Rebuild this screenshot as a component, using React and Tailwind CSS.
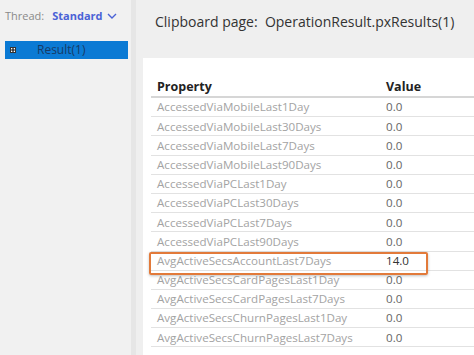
import React from 'react';

const rows = [
  ['AccessedViaMobileLast1Day', '0.0'],
  ['AccessedViaMobileLast30Days', '0.0'],
  ['AccessedViaMobileLast7Days', '0.0'],
  ['AccessedViaMobileLast90Days', '0.0'],
  ['AccessedViaPCLast1Day', '0.0'],
  ['AccessedViaPCLast30Days', '0.0'],
  ['AccessedViaPCLast7Days', '0.0'],
  ['AccessedViaPCLast90Days', '0.0'],
  ['AvgActiveSecsAccountLast7Days', '14.0', true],
  ['AvgActiveSecsCardPagesLast1Day', '0.0'],
  ['AvgActiveSecsCardPagesLast7Days', '0.0'],
  ['AvgActiveSecsChurnPagesLast1Day', '0.0'],
  ['AvgActiveSecsChurnPagesLast7Days', '0.0'],
];

const App = () => {
  return (
    <div
      className="w-[474px] h-[355px] overflow-hidden flex bg-[#efefef]"
      style={{ fontFamily: '"Open Sans", "Noto Sans", sans-serif' }}
    >
      {/* tree panel */}
      <div className="w-[131px] shrink-0 bg-[#f1f1f1] flex flex-col">
        <div className="h-[41px] flex items-start pt-[8px] pl-[5px] text-[11px]">
          <span className="text-[#8a8a8a]">Thread:</span>
          <span className="ml-[8px] font-bold text-[#4a62d6]">Standard</span>
          <svg className="ml-[4px] mt-[5px]" width="10" height="6" viewBox="0 0 10 6">
            <path d="M1 1l4 4 4-4" fill="none" stroke="#4a62d6" strokeWidth="1.4" />
          </svg>
        </div>
        <div className="ml-[5px] w-[123px] h-[18px] bg-[#0b7ad4] flex items-center">
          <div className="ml-[5px] w-[6px] h-[6px] bg-white border border-[#333] flex items-center justify-center">
            <div className="w-[4px] h-[4px] bg-[#111]" style={{ clipPath: 'polygon(35% 0,65% 0,65% 35%,100% 35%,100% 65%,65% 65%,65% 100%,35% 100%,35% 65%,0 65%,0 35%,35% 35%)' }} />
          </div>
          <span className="ml-[21px] text-[12px] text-[#173a66]">Result(1)</span>
        </div>
      </div>
      <div className="w-[5px] shrink-0 bg-[#e6e6e6]" />

      {/* clipboard page */}
      <div className="flex-1 flex flex-col">
        <div className="h-[58px] shrink-0 pl-[19px] pt-[11px] text-[14px] text-[#333] whitespace-pre">
          Clipboard page:  OperationResult.pxResults(1)
        </div>
        <div className="flex-1 ml-[7px] bg-white pl-[8px] pt-[20px]">
          <div className="relative">
            <div className="flex h-[20px] items-center pt-[1px] border-b-2 border-[#d6d6d6] text-[12.5px] font-bold text-[#222]">
              <div className="w-[229px] pl-[6px]">Property</div>
              <div className="pl-[6px]">Value</div>
            </div>
            {rows.map(([name, val, hi]) => (
              <div key={name} className="flex h-[19.2px] items-center border-b border-[#e2e2e2] text-[11.6px]">
                <div className="w-[229px] pl-[6px] text-[#a3a3a3]">{name}</div>
                <div className={`pl-[6px] ${hi ? 'text-[#333]' : 'text-[#666]'}`}>{val}</div>
              </div>
            ))}
            <div className="absolute left-[-2px] top-[174px] w-[279px] h-[23px] border-2 border-[#e27a3a] rounded-[2px] shadow-[0_1px_3px_rgba(0,0,0,0.25)]" />
          </div>
        </div>
      </div>
    </div>
  );
};

export default App;
